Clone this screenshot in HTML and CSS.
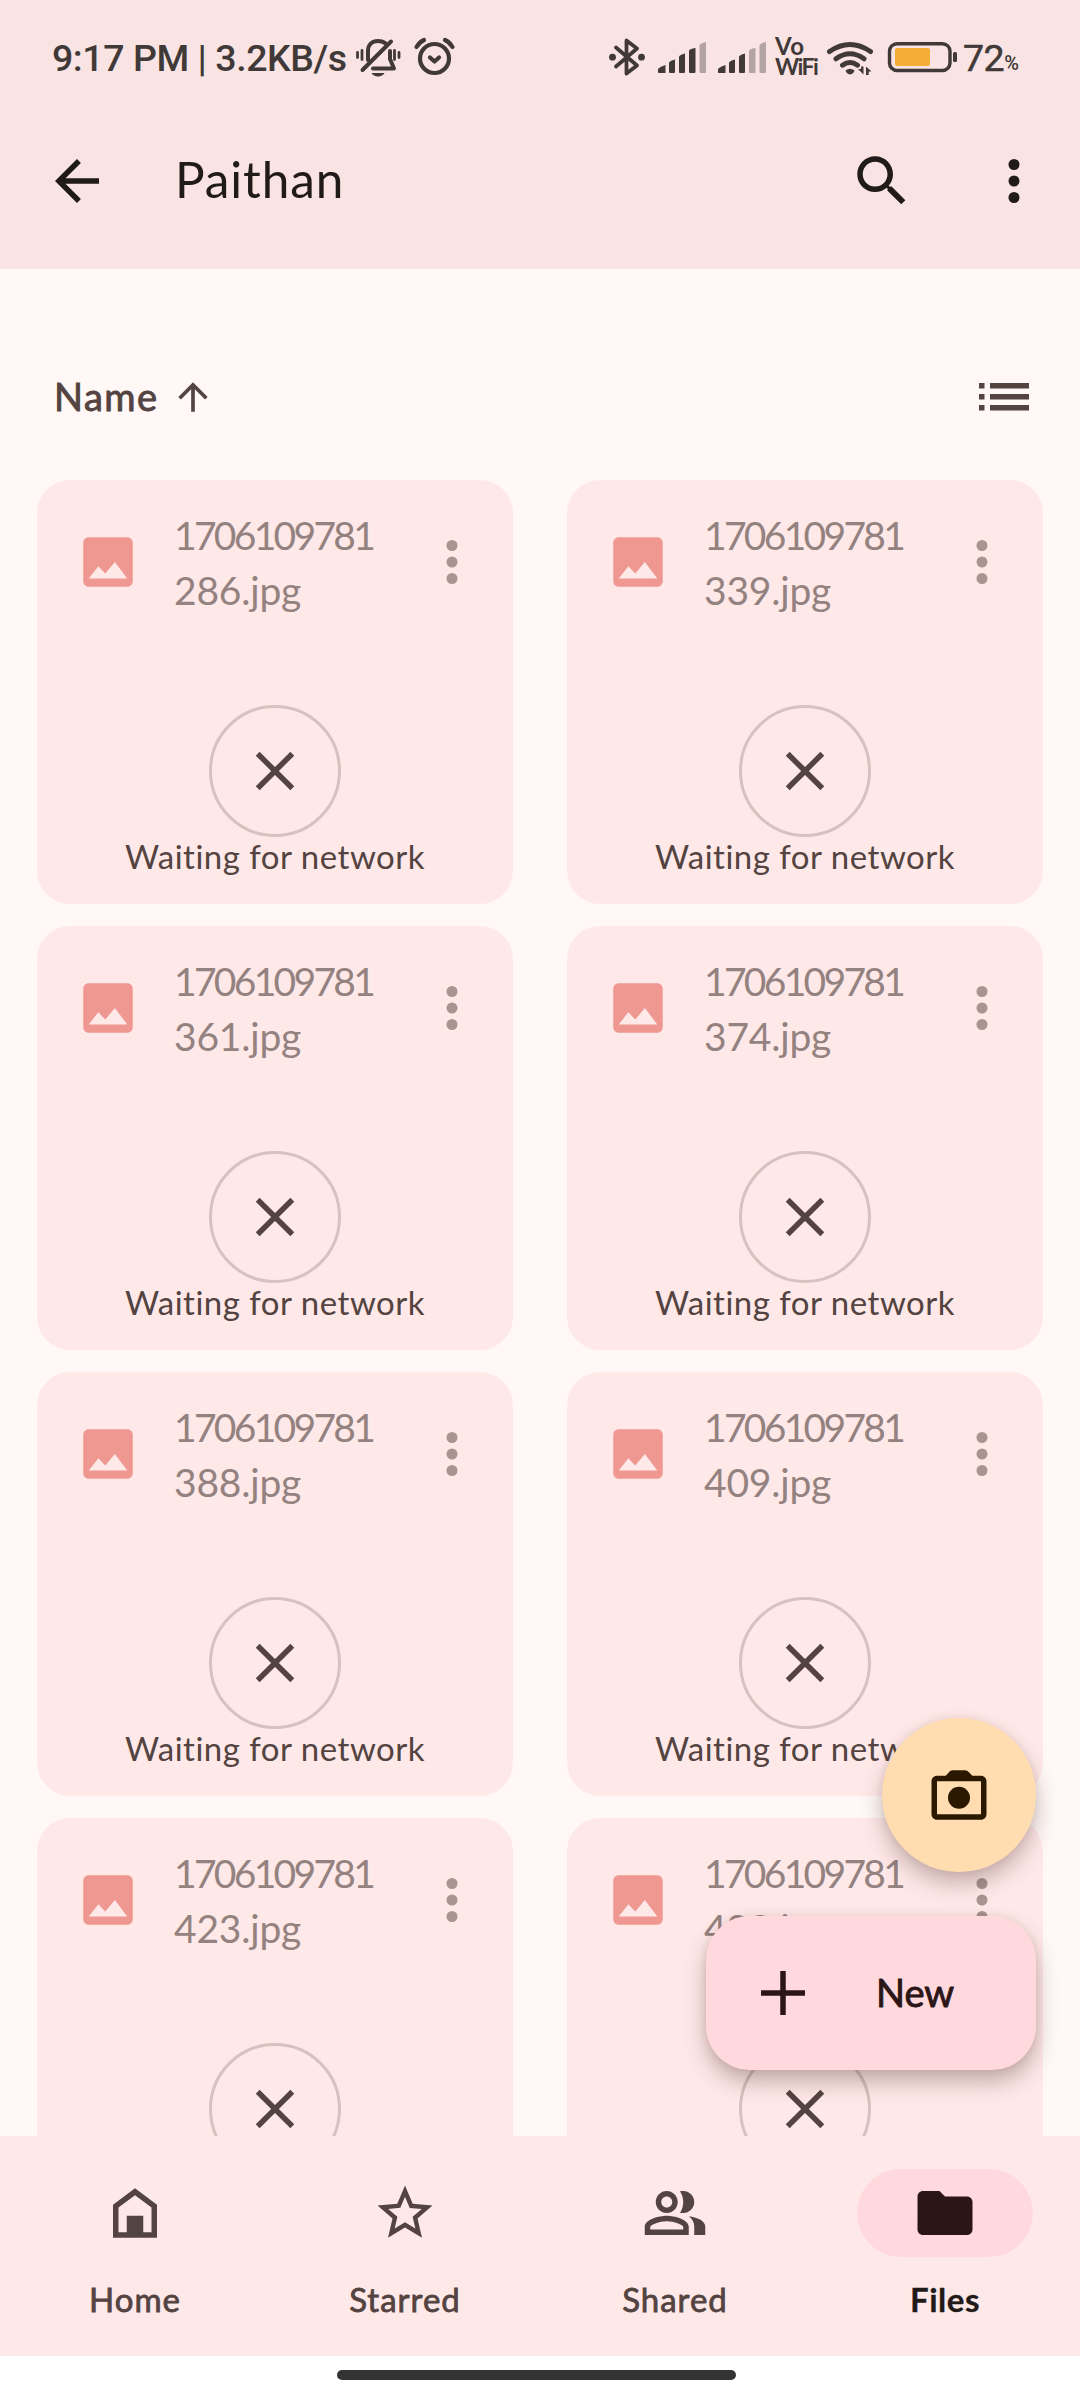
FILE: index.html
```html
<!DOCTYPE html>
<html lang="en">
<head>
<meta charset="UTF-8">
<meta name="viewport" content="width=device-width, initial-scale=1.0">
<title>Paithan</title>
<link rel="stylesheet" href="styles.css">
</head>
<body>
<!-- icons used more than once -->
<svg class="sprite" width="0" height="0">
    <symbol id="image" viewBox="0 0 24 24"><path d="M21 19V5c0-1.100-.9-2-2-2H5c-1.100 0-2 .9-2 2v14c0 1.100.9 2 2 2h14c1.100 0 2-.9 2-2zM8.500 13.500l2.500 2.700L14.500 12l4.500 6H5z"/></symbol>
    <symbol id="more" viewBox="0 0 24 24"><circle cx="12" cy="6" r="2"/><circle cx="12" cy="12" r="2"/><circle cx="12" cy="18" r="2"/></symbol>
    <symbol id="close" viewBox="0 0 24 24"><path d="M19 6.410L17.590 5 12 10.590 6.410 5 5 6.410 10.590 12 5 17.590 6.410 19 12 13.410 17.590 19 19 17.590 13.410 12z"/></symbol>
</svg>

<div class="screen">
    <div class="header">
        <div class="status">
            <span class="status-text">9:17 PM | 3.2KB/s</span>
            <svg class="status-icon" width="50" height="50" viewBox="353 30 50 50">
                <g fill="none" stroke="#403937" stroke-width="4" stroke-linecap="round">
                    <path d="M368 60V51c0-6 4-10 10-10 3 0 5 .6 7 2M362.500 70L391 41.500"/>
                    <path d="M390 51v8l4 9.500H373" stroke-linejoin="round"/>
                    <path d="M357.500 52.500v5M362 50.500v9M394.500 50.500v9M399 52.500v5" stroke-width="2.800"/>
                </g>
                <path d="M371.500 73h13c-2 4.500-11 4.500-13 0z" fill="#403937"/>
            </svg>
            <svg class="status-icon" width="50" height="50" viewBox="409 30 50 50">
                <g fill="none" stroke="#403937" stroke-width="4.200" stroke-linecap="round">
                    <circle cx="434.500" cy="58.500" r="14.500"/>
                    <path d="M430 57.500l4.500 4 4.500-4" stroke-linejoin="round"/>
                    <path d="M416.500 47q3-5 7.500-7M452.500 47q-3-5-7.500-7"/>
                </g>
            </svg>
            <div class="status-right">
                <svg width="50" height="50" viewBox="605 30 50 50">
                    <path d="M616 47.500L637 65.500 626.500 73.500V40.500L637 48.500 616 66.500" fill="none" stroke="#403937" stroke-width="3.800" stroke-linejoin="round" stroke-linecap="round"/>
                    <circle cx="612.500" cy="57.200" r="3.400" fill="#403937"/>
                    <circle cx="641.500" cy="57.200" r="3.400" fill="#403937"/>
                </svg>
                <svg width="60" height="50" viewBox="655 30 60 50">
                    <g fill="#403937">
                        <path d="M658 72V69.500q0-2 7.500-4.500V73H659q-1 0-1-1zM669 72V63q0-2 6-3.500V72q0 1-1 1h-4q-1 0-1-1zM679 72V57q0-2 6-3.500V72q0 1-1 1h-4q-1 0-1-1zM689 72V51q0-2 6.500-3V72q0 1-1 1h-4.500q-1 0-1-1z"/>
                    </g>
                    <path d="M699.500 72V45.500q0-2 6.500-3.500V72q0 1-1 1h-4.500q-1 0-1-1z" fill="#b3a4a3"/>
                </svg>
                <svg width="57" height="50" viewBox="655 30 57 50">
                    <path d="M658 72V69.500q0-2 7.500-4.500V73H659q-1 0-1-1zM669 72V63q0-2 6-3.500V72q0 1-1 1h-4q-1 0-1-1zM679 72V57q0-2 6-3.500V72q0 1-1 1h-4q-1 0-1-1z" fill="#403937"/>
                    <path d="M689 72V51q0-2 6.500-3V72q0 1-1 1h-4.500q-1 0-1-1zM699.500 72V45.500q0-2 6.500-3.500V72q0 1-1 1h-4.500q-1 0-1-1z" fill="#b3a4a3"/>
                </svg>
                <div class="vowifi"><div class="vo">Vo</div><div class="wf">WiFi</div></div>
                <svg width="60" height="50" viewBox="824 30 60 50">
                    <g fill="none" stroke="#403937" stroke-width="5" stroke-linecap="round">
                        <path d="M829.500 51.500q20.500-14 41 0" />
                        <path d="M836 58.800q14-10 28 0"/>
                        <path d="M842.500 65.200q7.500-5.500 15 0"/>
                    </g>
                    <path d="M845.500 70.500q4.500-3.500 9 0-1 3.500-4.500 4-3.500-.5-4.500-4z" fill="#403937"/>
                    <path d="M863.500 66.500v8l-5.500-5.500h3v-2.500zM866 75v-8.500l5.500 5h-2.800V75z" fill="#403937"/>
                </svg>
                <svg width="79" height="50" viewBox="884 30 79 50">
                    <rect x="889.500" y="43.700" width="60.500" height="26.800" rx="7.500" fill="none" stroke="#403937" stroke-width="3.400"/>
                    <rect x="895" y="48" width="35" height="18" rx="2" fill="#f4ae35"/>
                    <rect x="953" y="52" width="4" height="10" rx="1.500" fill="#403937"/>
                </svg>
                <span class="battery">72</span><span class="percent">%</span>
            </div>
        </div>
        <div class="appbar">
            <svg class="back" width="66" height="66" viewBox="0 0 24 24"><path d="M20 11H7.830l5.590-5.590L12 4l-8 8 8 8 1.410-1.410L7.830 13H20z"/></svg>
            <div class="title">Paithan</div>
            <svg class="search" width="66" height="66" viewBox="0 0 24 24"><path d="M15.500 14h-.79l-.28-.27C15.410 12.590 16 11.110 16 9.500 16 5.910 13.090 3 9.500 3S3 5.910 3 9.500 5.910 16 9.500 16c1.610 0 3.090-.59 4.230-1.570l.27.28v.79l5 4.990L20.490 19zm-6 0C7.010 14 5 11.990 5 9.500S7.010 5 9.500 5 14 7.010 14 9.500 11.990 14 9.500 14z"/></svg>
            <svg width="66" height="66"><use href="#more"/></svg>
        </div>
    </div>

    <div class="content">
        <div class="sort">
            <div class="sort-name">Name</div>
            <svg width="44" height="44" viewBox="0 0 24 24"><path d="M4 12l1.410 1.410L11 7.830V20h2V7.830l5.580 5.590L20 12l-8-8z"/></svg>
            <svg class="list-icon" width="50" height="28" viewBox="0 0 50 28"><path d="M0 0h5.500v5.500H0zM11 0h39v5.500H11zM0 11h5.500v5.500H0zM11 11h39v5.500H11zM0 22h5.500v5.500H0zM11 22h39v5.500H11z"/></svg>
        </div>

        <div class="files">
            <div class="card">
                <div class="card-top">
                    <svg class="card-image"><use href="#image"/></svg>
                    <div class="card-name"><div class="number">1706109781</div><div>286.jpg</div></div>
                    <svg class="card-more"><use href="#more"/></svg>
                </div>
                <div class="cancel"><svg width="66" height="66"><use href="#close"/></svg></div>
                <div class="waiting">Waiting for network</div>
            </div>
            <div class="card">
                <div class="card-top">
                    <svg class="card-image"><use href="#image"/></svg>
                    <div class="card-name"><div class="number">1706109781</div><div>339.jpg</div></div>
                    <svg class="card-more"><use href="#more"/></svg>
                </div>
                <div class="cancel"><svg width="66" height="66"><use href="#close"/></svg></div>
                <div class="waiting">Waiting for network</div>
            </div>
            <div class="card">
                <div class="card-top">
                    <svg class="card-image"><use href="#image"/></svg>
                    <div class="card-name"><div class="number">1706109781</div><div>361.jpg</div></div>
                    <svg class="card-more"><use href="#more"/></svg>
                </div>
                <div class="cancel"><svg width="66" height="66"><use href="#close"/></svg></div>
                <div class="waiting">Waiting for network</div>
            </div>
            <div class="card">
                <div class="card-top">
                    <svg class="card-image"><use href="#image"/></svg>
                    <div class="card-name"><div class="number">1706109781</div><div>374.jpg</div></div>
                    <svg class="card-more"><use href="#more"/></svg>
                </div>
                <div class="cancel"><svg width="66" height="66"><use href="#close"/></svg></div>
                <div class="waiting">Waiting for network</div>
            </div>
            <div class="card">
                <div class="card-top">
                    <svg class="card-image"><use href="#image"/></svg>
                    <div class="card-name"><div class="number">1706109781</div><div>388.jpg</div></div>
                    <svg class="card-more"><use href="#more"/></svg>
                </div>
                <div class="cancel"><svg width="66" height="66"><use href="#close"/></svg></div>
                <div class="waiting">Waiting for network</div>
            </div>
            <div class="card">
                <div class="card-top">
                    <svg class="card-image"><use href="#image"/></svg>
                    <div class="card-name"><div class="number">1706109781</div><div>409.jpg</div></div>
                    <svg class="card-more"><use href="#more"/></svg>
                </div>
                <div class="cancel"><svg width="66" height="66"><use href="#close"/></svg></div>
                <div class="waiting">Waiting for network</div>
            </div>
            <div class="card">
                <div class="card-top">
                    <svg class="card-image"><use href="#image"/></svg>
                    <div class="card-name"><div class="number">1706109781</div><div>423.jpg</div></div>
                    <svg class="card-more"><use href="#more"/></svg>
                </div>
                <div class="cancel"><svg width="66" height="66"><use href="#close"/></svg></div>
            </div>
            <div class="card">
                <div class="card-top">
                    <svg class="card-image"><use href="#image"/></svg>
                    <div class="card-name"><div class="number">1706109781</div><div>488.jpg</div></div>
                    <svg class="card-more"><use href="#more"/></svg>
                </div>
                <div class="cancel"><svg width="66" height="66"><use href="#close"/></svg></div>
            </div>
        </div>

        <!-- floating buttons -->
        <div class="floating">
            <div class="fab-camera">
                <svg width="66" height="66" viewBox="0 0 24 24"><path d="M20 5h-3.170l-1.200-1.300A2 2 0 0 0 14.150 3h-4.300c-.56 0-1.100.24-1.480.7L7.170 5H4c-1.100 0-2 .9-2 2v12c0 1.100.9 2 2 2h16c1.100 0 2-.9 2-2V7c0-1.100-.9-2-2-2zm0 14H4V7h16z"/><circle cx="12" cy="13" r="4"/></svg>
            </div>
            <div class="fab-new">
                <svg width="66" height="66" viewBox="0 0 24 24"><path d="M20 13h-7v7h-2v-7H4v-2h7V4h2v7h7z"/></svg>
                <span>New</span>
            </div>
        </div>
    </div>

    <div class="nav">
        <div class="nav-item">
            <div class="nav-icon"><svg width="66" height="66" viewBox="0 0 24 24"><path d="M12 3l-8 6v12h16V9zm6 16h-3v-6H9v6H6v-9l6-4.500 6 4.500z"/></svg></div>
            <div class="nav-label">Home</div>
        </div>
        <div class="nav-item">
            <div class="nav-icon"><svg width="66" height="66" viewBox="0 0 24 24"><path d="M22 9.240l-7.190-.62L12 2 9.190 8.630 2 9.240l5.460 4.730L5.820 21 12 17.270 18.180 21l-1.630-7.030zM12 15.400l-3.760 2.270 1-4.280-3.320-2.880 4.380-.38L12 6.100l1.710 4.040 4.380.38-3.320 2.880 1 4.280z"/></svg></div>
            <div class="nav-label">Starred</div>
        </div>
        <div class="nav-item">
            <div class="nav-icon"><svg width="66" height="66" viewBox="0 0 24 24"><path d="M9 12c2.210 0 4-1.790 4-4s-1.790-4-4-4-4 1.790-4 4 1.790 4 4 4zm0-6c1.100 0 2 .9 2 2s-.9 2-2 2-2-.9-2-2 .9-2 2-2zM9 13c-2.670 0-8 1.340-8 4v3h16v-3c0-2.660-5.330-4-8-4zm6 5H3v-.99C3.200 16.290 6.300 15 9 15s5.800 1.290 6 2zM13.800 12c.4.100.8 0 1.200 0 2.210 0 4-1.790 4-4s-1.790-4-4-4c-.4 0-.8 0-1.200.1 1.600 2.300 1.600 5.600 0 7.900zM17 13.200c1.200.9 2 2.100 2 3.800v3h4v-3c0-2.200-3-3.400-6-3.800z"/></svg></div>
            <div class="nav-label">Shared</div>
        </div>
        <div class="nav-item active">
            <div class="nav-icon"><svg width="66" height="66" viewBox="0 0 24 24"><path d="M10 4H4c-1.100 0-1.990.9-1.990 2L2 18c0 1.100.9 2 2 2h16c1.100 0 2-.9 2-2V8c0-1.100-.9-2-2-2h-8z"/></svg></div>
            <div class="nav-label">Files</div>
        </div>
    </div>
    <div class="gesture"><div class="handle"></div></div>
</div>
</body>
</html>
```
FILE: styles.css
```css
body {
    margin: 0;
    padding: 0;
    font-family: Lato, sans-serif;
    background-color: #ffffff;
    color: #201a19;
}

svg {
    display: block;
    flex-shrink: 0;
}

.sprite {
    position: absolute;
}

.screen {
    display: flex;
    flex-direction: column;
    width: 1080px;
    height: 2400px;
    overflow: hidden;
}

/* top */
.header {
    height: 269px;
    background-color: #f9e4e3;
}

.status {
    display: flex;
    align-items: flex-start;
    height: 62px;
    padding: 30px 59px 0 52px;
    font-family: Roboto, sans-serif;
    color: #403937;
}

.status-text {
    width: 301px;
    font-size: 37.5px;
    font-weight: 500;
    line-height: 57px;
    letter-spacing: -0.45px;
    white-space: nowrap;
}

.status-icon {
    margin-right: 6px;
}

.status-right {
    display: flex;
    margin-left: auto;
    width: 416px;
}

.vowifi {
    width: 52px;
    padding: 5px 0 0 3px;
    box-sizing: border-box;
    font-family: Lato, sans-serif;
    font-weight: 700;
    font-size: 23px;
    line-height: 21px;
}

.vo {
    font-size: 24px;
    letter-spacing: 0.5px;
}

.wf {
    letter-spacing: -1.6px;
}

.battery {
    font-size: 37.5px;
    line-height: 57px;
    letter-spacing: -0.5px;
    -webkit-text-stroke: 0.5px #403937;
}

.percent {
    font-size: 20px;
    font-weight: 500;
    line-height: 67px;
}

.appbar {
    display: flex;
    align-items: center;
    height: 178px;
    padding: 0 33px 0 44px;
    fill: #201a19;
}

.title {
    flex: 1;
    margin-left: 65px;
    padding-bottom: 4px;
    font-size: 49.5px;
    letter-spacing: 0.9px;
}

.search {
    margin-right: 66px;
}

/* list */
.content {
    position: relative;
    height: 1867px;
    overflow: hidden;
    background-color: #fff8f6;
}

.sort {
    display: flex;
    align-items: center;
    height: 88px;
    padding: 84px 51px 39px 54px;
    color: #534341;
    fill: #534341;
}

.sort-name {
    width: 117px;
    padding-bottom: 3px;
    font-size: 38px;
    letter-spacing: 1.5px;
    -webkit-text-stroke: 0.9px #534341;
}

.list-icon {
    margin-left: auto;
}

.files {
    display: grid;
    grid-template-columns: 476px 476px;
    column-gap: 54px;
    row-gap: 22px;
    padding: 0 37px;
}

.card {
    height: 424px;
    border-radius: 33px;
    background-color: #ffe9e8;
}

.card-top {
    display: flex;
    align-items: center;
    height: 110px;
    padding: 27px 28px 0 38px;
}

.card-image {
    width: 66px;
    height: 66px;
    fill: #ee9891;
}

.card-name {
    width: 211px;
    margin: 0 34px 0 33px;
    padding-top: 1px;
    font-size: 39px;
    line-height: 55px;
    letter-spacing: -0.2px;
    color: #948280;
}

.number {
    letter-spacing: -2.7px;
}

.card-more {
    width: 66px;
    height: 66px;
    fill: #a99492;
}

.cancel {
    display: flex;
    align-items: center;
    justify-content: center;
    width: 126px;
    height: 126px;
    margin: 88px auto 0;
    border: 3px solid #d8c1c0;
    border-radius: 50%;
    fill: #534341;
}

.waiting {
    font-size: 33px;
    line-height: 38px;
    text-align: center;
    letter-spacing: 0.5px;
    color: #534341;
}

/* floating buttons lie over the cards */
.floating {
    position: absolute;
    right: 44px;
    bottom: 66px;
    display: flex;
    flex-direction: column;
    align-items: flex-end;
    gap: 44px;
}

.fab-camera {
    display: flex;
    align-items: center;
    justify-content: center;
    width: 154px;
    height: 154px;
    border-radius: 50%;
    background-color: #ffddb0;
    fill: #2a1800;
    box-shadow: 0 12px 22px rgba(60, 30, 30, 0.28), 0 0 8px rgba(60, 30, 30, 0.08);
}

.fab-new {
    display: flex;
    align-items: center;
    width: 330px;
    height: 154px;
    padding-left: 44px;
    box-sizing: border-box;
    border-radius: 44px;
    background-color: #ffd9dd;
    color: #2c1517;
    fill: #2c1517;
    box-shadow: 0 12px 22px rgba(60, 30, 30, 0.3), 0 0 8px rgba(60, 30, 30, 0.08);
}

.fab-new span {
    margin-left: 60px;
    padding-bottom: 3px;
    font-size: 38px;
    -webkit-text-stroke: 0.9px #2c1517;
}

/* bottom navigation */
.nav {
    display: flex;
    height: 220px;
    background-color: #ffe9e8;
}

.nav-item {
    display: flex;
    flex-direction: column;
    align-items: center;
    width: 270px;
    padding-top: 33px;
    box-sizing: border-box;
    color: #534341;
    fill: #534341;
}

.nav-icon {
    display: flex;
    align-items: center;
    justify-content: center;
    width: 176px;
    height: 88px;
    border-radius: 44px;
}

.nav-label {
    margin-top: 21px;
    font-size: 33px;
    line-height: 42px;
    letter-spacing: 1px;
    -webkit-text-stroke: 0.8px #534341;
}

.active {
    color: #201a19;
    fill: #2c1517;
}

.active .nav-icon {
    background-color: #ffd9dd;
}

.active .nav-label {
    font-weight: 700;
    letter-spacing: 0.5px;
    -webkit-text-stroke: 0.3px #201a19;
}

.gesture {
    height: 44px;
    background-color: #ffffff;
}

.handle {
    width: 399px;
    height: 10px;
    margin: 14px 0 0 337px;
    border-radius: 5px;
    background-color: #333333;
}
```
